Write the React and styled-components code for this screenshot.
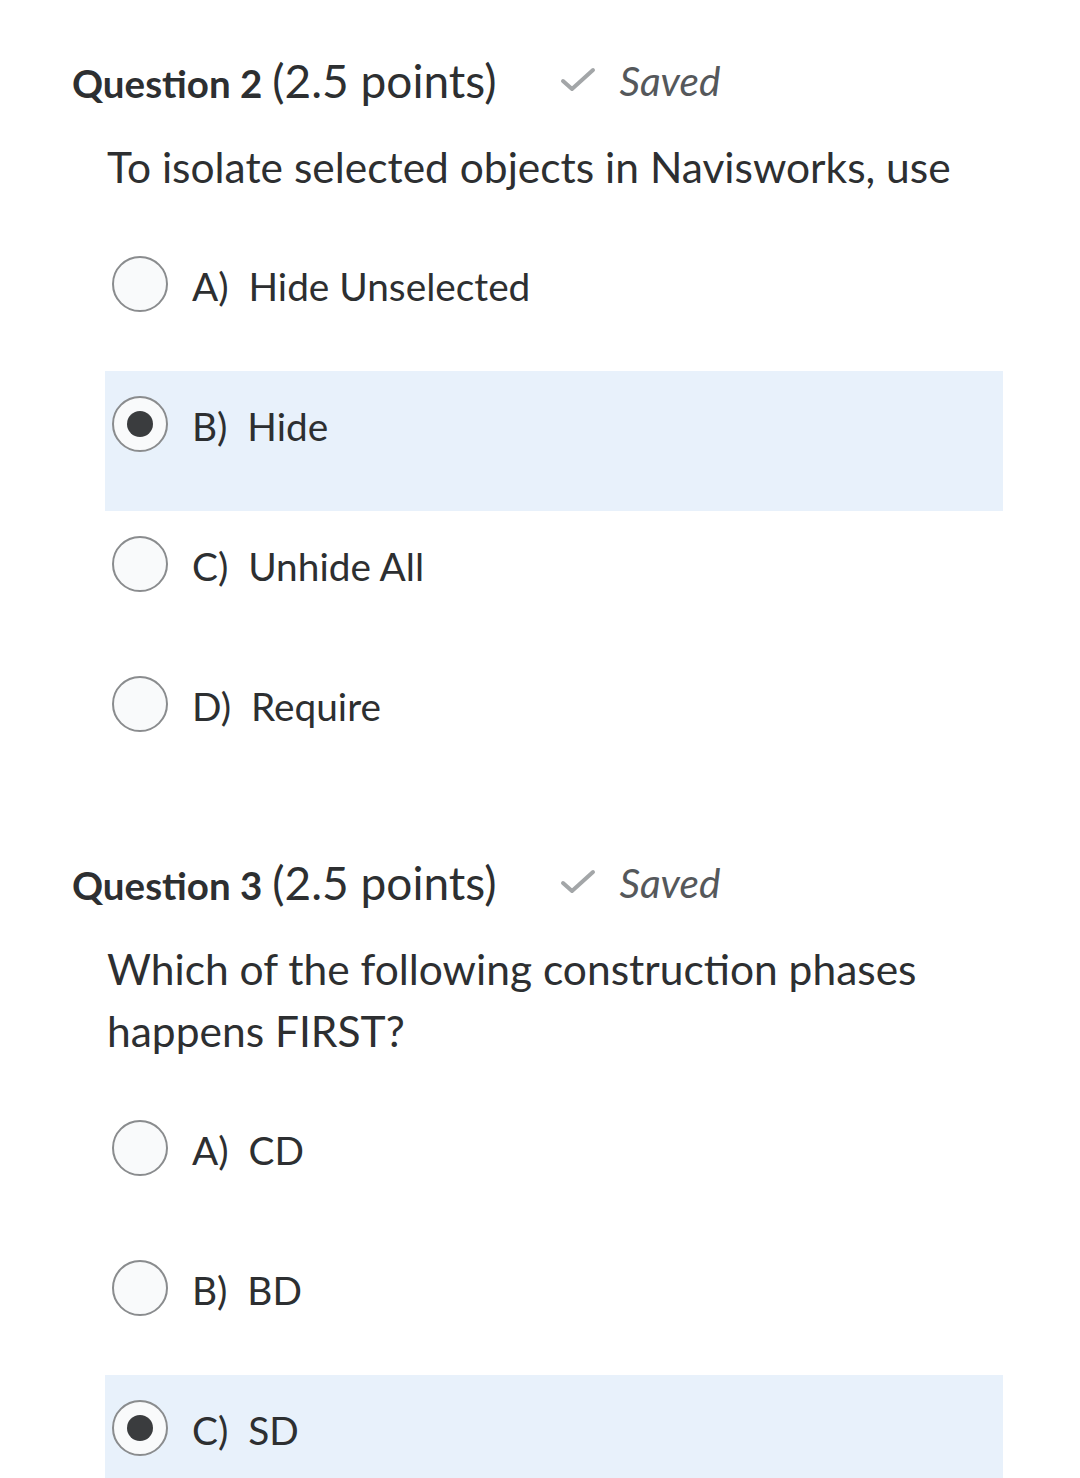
import React from "react";
import styled, { createGlobalStyle } from "styled-components";

const GlobalStyle = createGlobalStyle`
  body {
    margin: 0;
    background: #fff;
    font-family: Lato, "Open Sans", sans-serif;
    color: #2d2f31;
  }
`;

const questions = [
  {
    number: 2,
    points: "2.5",
    text: "To isolate selected objects in Navisworks, use",
    options: ["A)  Hide Unselected", "B)  Hide", "C)  Unhide All", "D)  Require"],
    selected: 1,
  },
  {
    number: 3,
    points: "2.5",
    text: "Which of the following construction phases happens FIRST?",
    options: ["A)  CD", "B)  BD", "C)  SD"],
    selected: 2,
  },
];

const CheckIcon = () => (
  <svg width="36" height="26" viewBox="0 0 36 26" fill="none">
    <path
      d="M3 14 L12 22 L33 3"
      stroke="#a3a6a8"
      strokeWidth="4"
      strokeLinecap="round"
      strokeLinejoin="round"
    />
  </svg>
);

const Question = ({ q }) => (
  <QuestionBlock>
    <Heading>
      <Title>
        <strong>Question {q.number}</strong> <Points>({q.points} points)</Points>
      </Title>
      <SavedTag>
        <CheckIcon />
        <span>Saved</span>
      </SavedTag>
    </Heading>
    <Prompt>{q.text}</Prompt>
    <Options>
      {q.options.map((opt, i) => (
        <Option key={opt} $active={i === q.selected}>
          <Radio $active={i === q.selected} />
          <OptionLabel>{opt}</OptionLabel>
        </Option>
      ))}
    </Options>
  </QuestionBlock>
);

export default function App() {
  return (
    <>
      <GlobalStyle />
      <Page>
        {questions.map((q) => (
          <Question key={q.number} q={q} />
        ))}
      </Page>
    </>
  );
}

const Page = styled.div`
  padding: 50px 0 0 72px;
  width: 1080px;
  box-sizing: border-box;
`;

const QuestionBlock = styled.section`
  & + & {
    margin-top: 61px;
  }
`;

const Heading = styled.div`
  display: flex;
  align-items: center;
  height: 60px;
`;

const Title = styled.h2`
  margin: 0;
  font-size: 38.5px;
  font-weight: 400;
  color: #2d2f31;
  white-space: pre;

  strong {
    font-weight: 700;
  }
`;

const Points = styled.span`
  font-size: 46px;
`;

const SavedTag = styled.div`
  display: flex;
  align-items: center;
  gap: 23px;
  margin-left: 64px;
  font-size: 40.5px;
  font-style: italic;
  color: #55585b;
`;

const Prompt = styled.p`
  margin: 26px 0 0 35px;
  max-width: 898px;
  font-size: 42.5px;
  line-height: 62px;
  color: #2d2f31;
`;

const Options = styled.div`
  margin: 33px 0 0 33px;
  width: 898px;
  display: flex;
  flex-direction: column;
`;

const Option = styled.label`
  display: flex;
  align-items: flex-start;
  gap: 24px;
  height: 140px;
  box-sizing: border-box;
  padding: 25px 0 0 7px;
  background: ${(p) => (p.$active ? "#e8f1fb" : "transparent")};
`;

const Radio = styled.span`
  flex: none;
  width: 56px;
  height: 56px;
  border-radius: 50%;
  border: 2px solid #8a8c8e;
  box-sizing: border-box;
  background: #f9fafb;
  display: flex;
  align-items: center;
  justify-content: center;

  &::after {
    content: "";
    display: ${(p) => (p.$active ? "block" : "none")};
    width: 26px;
    height: 26px;
    border-radius: 50%;
    background: #3a3c3e;
  }
`;

const OptionLabel = styled.span`
  font-size: 38.8px;
  line-height: 60px;
  white-space: pre;
  color: #2d2f31;
`;
